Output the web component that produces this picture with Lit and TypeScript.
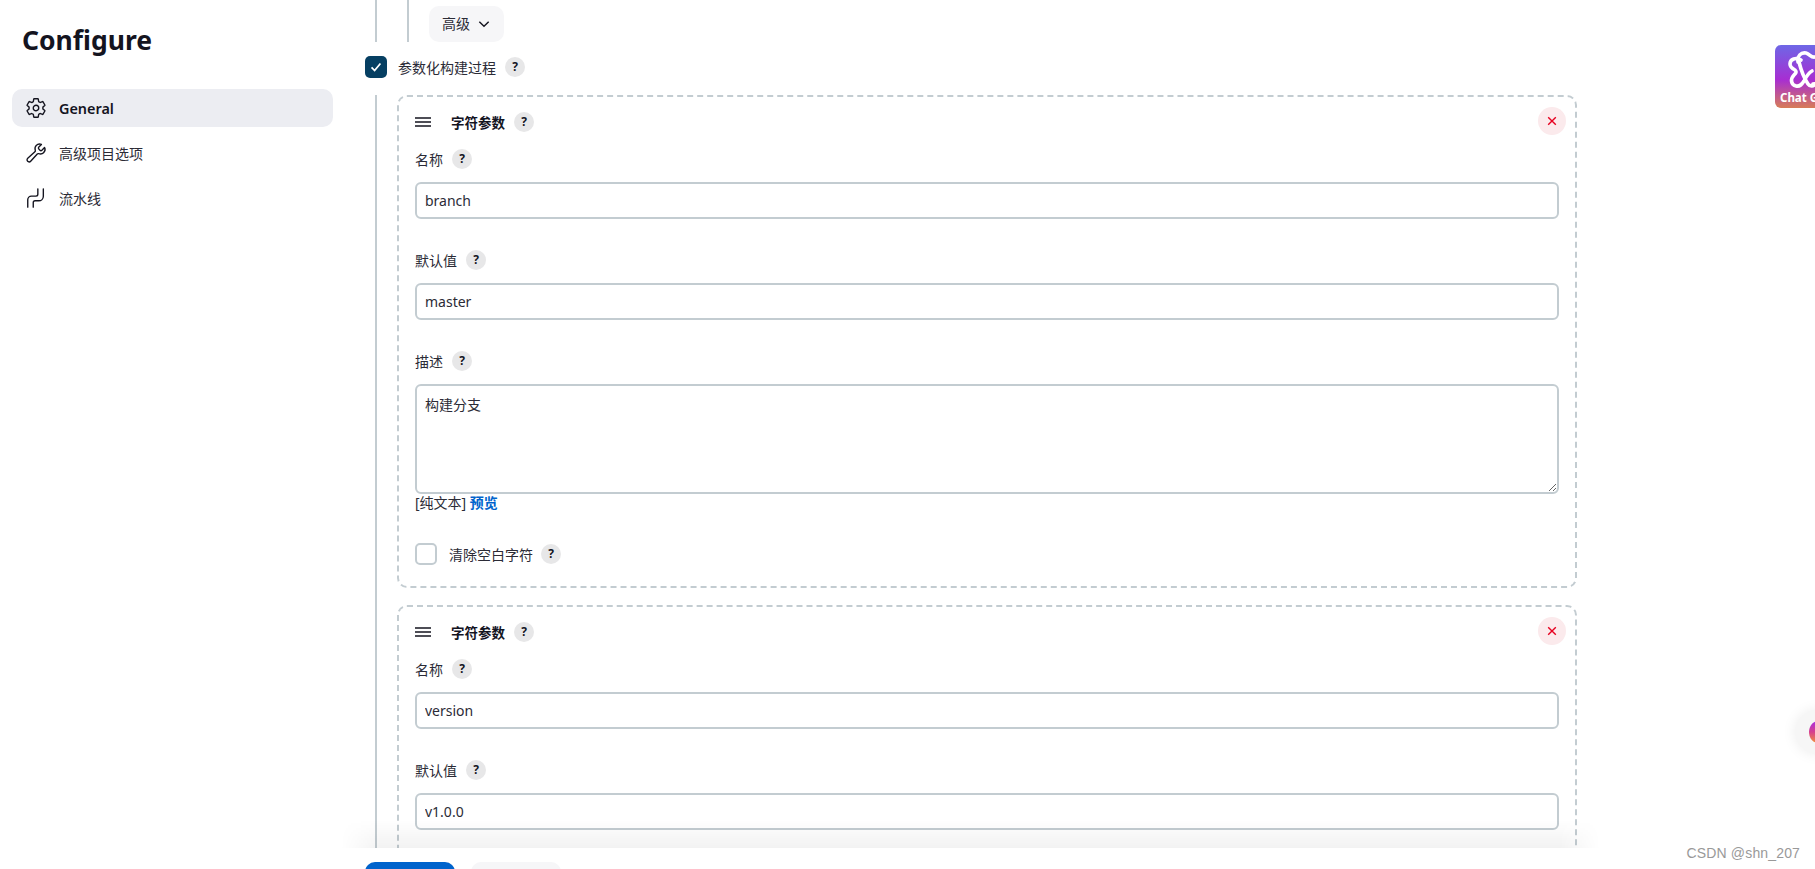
import { LitElement, html, css, svg } from "lit";
import { customElement } from "lit/decorators.js";

const gear = svg`<path d="M262.29 192.31a64 64 0 1057.4 57.4 64.13 64.13 0 00-57.4-57.4zM416.39 256a154.34 154.34 0 01-1.53 20.79l45.21 35.46a10.81 10.81 0 012.45 13.75l-42.77 74a10.81 10.81 0 01-13.14 4.59l-44.9-18.08a16.11 16.11 0 00-15.17 1.75A164.48 164.48 0 01325 400.8a15.94 15.94 0 00-8.82 12.14l-6.73 47.89a11.08 11.08 0 01-10.68 9.17h-85.54a11.11 11.11 0 01-10.69-8.87l-6.72-47.82a16.07 16.07 0 00-9-12.22 155.3 155.3 0 01-21.46-12.57 16 16 0 00-15.11-1.71l-44.89 18.07a10.81 10.81 0 01-13.14-4.58l-42.77-74a10.8 10.8 0 012.45-13.75l38.21-30a16.05 16.05 0 006-14.08c-.36-4.17-.58-8.33-.58-12.5s.21-8.27.58-12.35a16 16 0 00-6.07-13.94l-38.19-30A10.81 10.81 0 0149.48 186l42.77-74a10.81 10.81 0 0113.14-4.59l44.9 18.08a16.11 16.11 0 0015.17-1.75A164.48 164.48 0 01187 111.2a15.94 15.94 0 008.82-12.14l6.73-47.89A11.08 11.08 0 01213.23 42h85.54a11.11 11.11 0 0110.69 8.87l6.72 47.82a16.07 16.07 0 009 12.22 155.3 155.3 0 0121.46 12.57 16 16 0 0015.11 1.71l44.89-18.07a10.81 10.81 0 0113.14 4.58l42.77 74a10.8 10.8 0 01-2.45 13.75l-38.21 30a16.05 16.05 0 00-6.05 14.08c.33 4.14.55 8.3.55 12.47z"/>`;
const wrench = svg`<path d="M393.87 190a32.1 32.1 0 01-45.25 0l-26.57-26.57a32.09 32.09 0 010-45.26L382.19 58a1 1 0 00-.3-1.64c-38.82-16.64-89.15-8.16-121.11 23.57-30.59 30.36-32.34 76.05-21.14 115.93a31.93 31.93 0 01-9.06 32.08L64 380a48.17 48.17 0 1068 68l153.86-167a31.93 31.93 0 0131.6-9.13c39.54 10.59 84.54 8.6 114.72-21.19 32.49-32 39.5-88.56 23.75-120.93a1 1 0 00-1.6-.26z"/>`;

const help = html`<span class="help">?</span>`;

function field(label: string, value: string) {
  return html`<div class="field">
    <div class="label">${label}${help}</div>
    <input class="input" .value=${value} />
  </div>`;
}

function card(name: string, def: string, desc?: string) {
  return html`<section class="card ${desc ? "" : "tail"}">
    <header class="card-head">
      <svg class="handle" viewBox="0 0 16 10" aria-hidden="true">
        <path d="M0 1h16M0 5h16M0 9h16" stroke="#14141f" stroke-width="1.5" fill="none" />
      </svg>
      <span class="card-title">字符参数</span>${help}
      <button class="del" aria-label="删除">
        <svg viewBox="0 0 10 10"><path d="M1.2 1.2l7.6 7.6M8.8 1.2L1.2 8.8" stroke="#e6001f" stroke-width="1.4" fill="none" /></svg>
      </button>
    </header>
    ${field("名称", name)} ${field("默认值", def)}
    ${desc
      ? html`<div class="field">
            <div class="label desc">描述${help}</div>
            <textarea class="area" .value=${desc}></textarea>
            <div class="hint">[纯文本] <a class="link">预览</a></div>
          </div>
          <label class="trim"><span class="box"></span>清除空白字符${help}</label>`
      : ""}
  </section>`;
}

@customElement("app-root")
export class AppRoot extends LitElement {
  static styles = css`
    :host {
      display: block;
      position: relative;
      height: 869px;
      overflow: hidden;
      background: #fff;
      color: #14141f;
      font-family: "Noto Sans", "Noto Sans CJK SC", sans-serif;
      font-size: 14px;
    }
    .page {
      display: grid;
      grid-template-columns: 365px 1212px;
      align-items: start;
    }
    .side {
      padding: 20px 0 0 12px;
    }
    h1 {
      margin: 0 0 28px 10px;
      font-size: 26.5px;
      line-height: 41px;
      font-weight: 700;
    }
    nav {
      display: flex;
      flex-direction: column;
      gap: 7px;
      width: 321px;
    }
    .nav-item {
      display: flex;
      align-items: center;
      gap: 12px;
      height: 38px;
      padding-left: 13px;
      border-radius: 10px;
      color: #2b2b36;
    }
    .nav-item.active {
      background: #ecedf2;
      color: #14141f;
      font-weight: 600;
      font-size: 14.4px;
    }
    .nav-item svg {
      width: 22px;
      height: 22px;
      fill: none;
      stroke: #14141f;
      stroke-width: 32;
      stroke-linecap: round;
      stroke-linejoin: round;
      flex: none;
    }
    .nav-item svg.pipe {
      stroke-width: 1.5;
    }
    .top {
      height: 42px;
      margin-left: 10px;
      border-left: 2px solid #c3ccd1;
      padding-left: 30px;
    }
    .top-inner {
      height: 42px;
      border-left: 2px solid #c3ccd1;
      padding: 6px 0 0 20px;
      box-sizing: border-box;
    }
    .adv {
      display: inline-flex;
      align-items: center;
      gap: 7px;
      height: 36px;
      padding: 0 13px 3px;
      border: 0;
      border-radius: 10px;
      background: #f6f6f8;
      color: #2b2b36;
      font: inherit;
    }
    .adv svg {
      width: 14px;
      height: 14px;
      margin-top: 2px;
    }
    .param {
      display: flex;
      align-items: center;
      height: 22px;
      margin-top: 14px;
      color: #2b2b36;
    }
    .check {
      display: grid;
      place-items: center;
      width: 22px;
      height: 22px;
      margin-right: 11px;
      border-radius: 5px;
      background: #063f62;
    }
    .check svg {
      width: 14px;
      height: 14px;
    }
    .help {
      display: inline-grid;
      place-items: center;
      width: 20px;
      height: 20px;
      margin-left: 9px;
      border-radius: 50%;
      background: #e7e7e8;
      color: #14141f;
      font-size: 12px;
      font-weight: 700;
      line-height: 1;
    }
    .params {
      display: flex;
      flex-direction: column;
      gap: 17px;
      margin: 17px 0 0 10px;
      padding-left: 20px;
      border-left: 2px solid #c3ccd1;
    }
    .card {
      position: relative;
      display: flex;
      flex-direction: column;
      padding: 14px 16px 21px 16px;
      border: 2px dashed #c3ccd1;
      border-radius: 10px;
    }
    .card.tail {
      min-height: 400px;
      box-sizing: border-box;
    }
    .card-head {
      display: flex;
      align-items: center;
      height: 22px;
    }
    .handle {
      width: 16px;
      height: 10px;
      margin-right: 20px;
    }
    .card-title {
      font-size: 13.5px;
      font-weight: 600;
    }
    .del {
      position: absolute;
      top: 10px;
      right: 9px;
      display: grid;
      place-items: center;
      width: 28px;
      height: 28px;
      padding: 0;
      border: 0;
      border-radius: 50%;
      background: #fbeaec;
    }
    .del svg {
      width: 10px;
      height: 10px;
    }
    .field {
      display: flex;
      flex-direction: column;
      margin-top: 15px;
    }
    .field + .field {
      margin-top: 30px;
    }
    .label {
      display: flex;
      align-items: center;
      height: 22px;
      margin-bottom: 12px;
      color: #2b2b36;
    }
    .input,
    .area {
      box-sizing: border-box;
      width: 100%;
      height: 37px;
      padding: 0 8px;
      border: 2px solid #c3ccd1;
      border-radius: 6px;
      background: #fff;
      color: #2b2b36;
      font: 14px "Noto Sans", "Noto Sans CJK SC", sans-serif;
      outline: none;
    }
    .area {
      display: block;
      height: 110px;
      padding: 8px;
      resize: vertical;
    }
    .hint {
      margin-top: 0;
      line-height: 18px;
      color: #2b2b36;
    }
    .link {
      color: #0063cc;
      font-weight: 700;
    }
    .trim {
      display: flex;
      align-items: center;
      height: 22px;
      margin-top: 31px;
      color: #2b2b36;
    }
    .trim .help {
      margin-left: 8px;
    }
    .box {
      box-sizing: border-box;
      width: 22px;
      height: 22px;
      margin-right: 12px;
      border: 2px solid #c3ccd1;
      border-radius: 5px;
    }
    .bar {
      position: absolute;
      left: 341px;
      right: 215px;
      top: 848px;
      bottom: 0;
      display: flex;
      gap: 16px;
      padding: 14px 0 0 24px;
      background: #fff;
    }
    .bar::before {
      content: "";
      position: absolute;
      left: 0;
      right: 0;
      top: -28px;
      height: 28px;
      background: linear-gradient(180deg, rgba(0, 0, 0, 0), rgba(0, 0, 0, 0.05));
      -webkit-mask-image: linear-gradient(90deg, transparent 0, #000 40px, #000 calc(100% - 40px), transparent 100%);
      mask-image: linear-gradient(90deg, transparent 0, #000 40px, #000 calc(100% - 40px), transparent 100%);
    }
    .btn {
      width: 90px;
      height: 40px;
      border: 0;
      border-radius: 10px;
      background: #0063cc;
    }
    .btn.alt {
      background: #f6f6f8;
    }
    .mark {
      position: absolute;
      top: 843px;
      right: 15px;
      font: 14px/20px "Liberation Sans", sans-serif;
      letter-spacing: 0.15px;
      color: #999;
    }
    .tile {
      position: absolute;
      left: 1775px;
      top: 45px;
      width: 66px;
      height: 63px;
      border-radius: 6px;
      background: linear-gradient(180deg, #6e67e6 0%, #a72ed2 55%, #d77c58 100%);
      color: #fff;
      font: 700 11.5px/14px "Noto Sans", sans-serif;
      white-space: nowrap;
    }
    .tile svg {
      position: absolute;
      left: 0;
      top: 0;
      width: 66px;
      height: 63px;
      fill: none;
      stroke: #fff;
      stroke-width: 3.6;
      stroke-linecap: round;
      stroke-linejoin: round;
    }
    .tile span {
      position: absolute;
      left: 5px;
      top: 46px;
    }
    .orb {
      position: absolute;
      left: 1795px;
      top: 710px;
      display: flex;
      align-items: center;
      width: 44px;
      height: 44px;
      padding-left: 13px;
      box-sizing: border-box;
      border-radius: 50%;
      background: #f6f6f6;
      box-shadow: 0 0 14px rgba(0, 0, 0, 0.08);
    }
    .orb svg {
      width: 20px;
      height: 22px;
      flex: none;
    }
  `;

  render() {
    return html`
      <div class="page">
        <aside class="side">
          <h1>Configure</h1>
          <nav>
            <div class="nav-item active"><svg viewBox="0 0 512 512">${gear}</svg>General</div>
            <div class="nav-item"><svg viewBox="0 0 512 512">${wrench}</svg>高级项目选项</div>
            <div class="nav-item">
              <svg class="pipe" viewBox="0 0 24 24">
                <path d="M14 2v6a2 2 0 0 1-2 2H7a4 4 0 0 0-4 4v8" />
                <path d="M20 2v8a5 5 0 0 1-5 5h-4a2 2 0 0 0-2 2v5" />
              </svg>
              流水线
            </div>
          </nav>
        </aside>
        <main>
          <div class="top">
            <div class="top-inner">
              <button class="adv">
                高级
                <svg viewBox="0 0 12 12"><path d="M2 4l4 4 4-4" stroke="#14141f" stroke-width="1.2" fill="none" /></svg>
              </button>
            </div>
          </div>
          <label class="param">
            <span class="check"><svg viewBox="0 0 12 12"><path d="M2.2 6.4l2.6 2.6 5-6" stroke="#fff" stroke-width="1.5" fill="none" /></svg></span>
            参数化构建过程${help}
          </label>
          <div class="params">
            ${card("branch", "master", "构建分支")}
            ${card("version", "v1.0.0")}
          </div>
        </main>
      </div>
      <footer class="bar">
        <button class="btn" aria-label="保存"></button>
        <button class="btn alt" aria-label="应用"></button>
      </footer>
      <div class="mark">CSDN @shn_207</div>
      <div class="tile">
        <svg viewBox="0 0 66 63">
          <path d="M23 17c-1-6 3-10 8-9 4 1 5 5 9 4 3-1 5-5 9-4 5 1 7 7 3 11-3 3-3 6 0 9 4 4 2 11-4 12-4 1-6-2-10-1" />
          <path d="M26 15c-5-3-11-1-11 4 0 3 3 5 5 6 2 2 1 3-1 5-4 4-3 10 2 11 4 1 6-2 8-5 2-4 4-8 8-10" />
          <path d="M24 17c2 8 5 16 9 22 2 3 6 2 7 0" />
        </svg>
        <span>Chat GPT</span>
      </div>
      <div class="orb">
        <svg viewBox="0 0 20 22">
          <defs>
            <linearGradient id="gem" x1="0" y1="0" x2="0" y2="1">
              <stop offset="0" stop-color="#a92de0" />
              <stop offset="0.5" stop-color="#d63f8f" />
              <stop offset="1" stop-color="#f2903a" />
            </linearGradient>
          </defs>
          <path d="M10 0c5 0 9 5 9 11s-4 11-9 11-9-5-9-11S5 0 10 0z" fill="url(#gem)" />
        </svg>
      </div>
    `;
  }
}
